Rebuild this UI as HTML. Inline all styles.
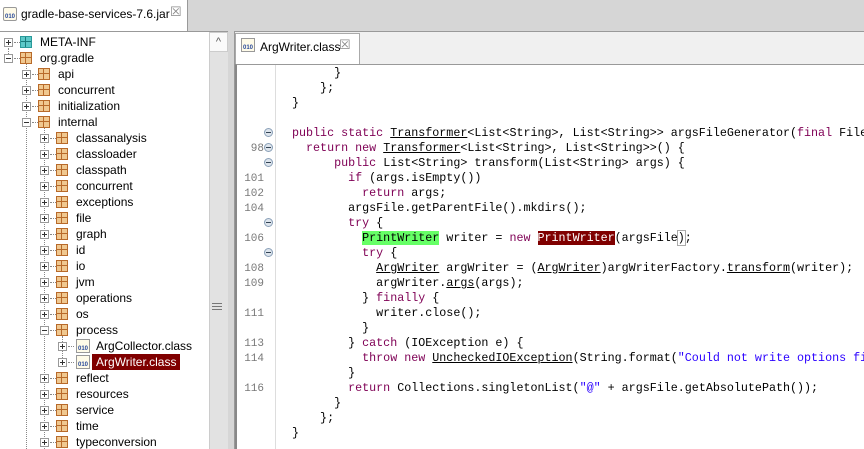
<!DOCTYPE html>
<html><head><meta charset="utf-8"><style>
*{margin:0;padding:0;box-sizing:border-box}
html,body{width:864px;height:449px;overflow:hidden}
body{background:#d6d6d6;font-family:"Liberation Sans","Noto Sans CJK JP",sans-serif;position:relative}
.a{position:absolute}
.tr{position:absolute;height:16px;font-size:12px;line-height:16px;color:#000;white-space:nowrap}
.bx{position:absolute;width:9px;height:9px;border:1px solid #999;background:#fff;top:4px}
.bx:before{content:"";position:absolute;left:1px;top:3px;width:5px;height:1px;background:#333}
.bx.p:after{content:"";position:absolute;left:3px;top:1px;width:1px;height:5px;background:#333}
.pk{position:absolute;top:2px;width:12px;height:12px;border:1px solid #b86a2a;background:
linear-gradient(#b86a2a,#b86a2a) 4px 0/1px 100% no-repeat,linear-gradient(#b86a2a,#b86a2a) 0 4px/100% 1px no-repeat,#f0c890}
.pk.m{border-color:#2a9a9a;background:linear-gradient(#1a7a7a,#1a7a7a) 4px 0/1px 100% no-repeat,linear-gradient(#1a7a7a,#1a7a7a) 0 4px/100% 1px no-repeat,#5cc8c8}
.cf{position:absolute;top:1px;width:14px;height:14px;border:1px solid #999;background:#fffbe8;font:bold 6px "Liberation Sans",sans-serif;color:#2a4a9a;padding-top:6px;text-align:center}
.dl{position:absolute;border-top:1px dotted #888;height:0;top:8px;width:6px}
.code{position:absolute;left:292px;font-family:"Liberation Mono",monospace;font-size:11.7px;line-height:15px;white-space:pre;color:#000}
.ln{position:absolute;left:238px;width:26px;text-align:right;font-family:"Liberation Mono",monospace;font-size:11px;color:#787878;line-height:16px}
.k{color:#7f0055}.s{color:#2a00ff}.u{text-decoration:underline}
.fd{position:absolute;left:264px;width:9px;height:9px;border-radius:50%;background:#dde4ec;border:1px solid #8aa0b8}
.fd:after{content:"";position:absolute;left:1px;top:3px;width:5px;height:1px;background:#345}
</style></head><body>
<div class="a" style="left:0;top:0;width:188px;height:31px;background:#fff;border-right:1px solid #999"></div>
<div class="cf" style="left:3px;top:7px;border-radius:2px">010</div>
<div class="a" style="left:21px;top:7px;font-size:12px">gradle-base-services-7.6.jar</div>
<div class="a" style="left:170px;top:4px;font-size:13px;color:#888">☒</div>
<div class="a" style="left:0;top:31px;width:228px;height:418px;background:#fff;border-top:1px solid #999"></div>
<div class="a" style="left:209px;top:32px;width:19px;height:417px;background:#e2e2e2;border-left:1px solid #ccc"></div>
<div class="a" style="left:209px;top:32px;width:19px;height:20px;background:#fafafa;border:1px solid #ccc;text-align:center;font-size:11px;line-height:18px;color:#555">^</div>
<div class="a" style="left:212px;top:303px;width:10px;height:7px;border-top:1px solid #777;border-bottom:1px solid #777"></div>
<div class="a" style="left:212px;top:306px;width:10px;height:1px;background:#777"></div>
<div class="a" style="left:228px;top:31px;width:6px;height:418px;background:#d6d6d6"></div>
<div class="a" style="left:8px;top:48px;height:10px;border-left:1px dotted #888"></div>
<div class="a" style="left:26px;top:64px;height:385px;border-left:1px dotted #888"></div>
<div class="a" style="left:44px;top:128px;height:321px;border-left:1px dotted #888"></div>
<div class="a" style="left:62px;top:336px;height:24px;border-left:1px dotted #888"></div>

<div class="tr" style="top:34px;left:0"><div class="bx p" style="left:4px"></div><div class="dl" style="left:14px"></div><div class="pk m" style="left:20px"></div><span class="a" style="left:40px">META-INF</span></div>
<div class="tr" style="top:50px;left:0"><div class="bx" style="left:4px"></div><div class="dl" style="left:14px"></div><div class="pk" style="left:20px"></div><span class="a" style="left:40px">org.gradle</span></div>
<div class="tr" style="top:66px;left:18px"><div class="bx p" style="left:4px"></div><div class="dl" style="left:14px"></div><div class="pk" style="left:20px"></div><span class="a" style="left:40px">api</span></div>
<div class="tr" style="top:82px;left:18px"><div class="bx p" style="left:4px"></div><div class="dl" style="left:14px"></div><div class="pk" style="left:20px"></div><span class="a" style="left:40px">concurrent</span></div>
<div class="tr" style="top:98px;left:18px"><div class="bx p" style="left:4px"></div><div class="dl" style="left:14px"></div><div class="pk" style="left:20px"></div><span class="a" style="left:40px">initialization</span></div>
<div class="tr" style="top:114px;left:18px"><div class="bx" style="left:4px"></div><div class="dl" style="left:14px"></div><div class="pk" style="left:20px"></div><span class="a" style="left:40px">internal</span></div>
<div class="tr" style="top:130px;left:36px"><div class="bx p" style="left:4px"></div><div class="dl" style="left:14px"></div><div class="pk" style="left:20px"></div><span class="a" style="left:40px">classanalysis</span></div>
<div class="tr" style="top:146px;left:36px"><div class="bx p" style="left:4px"></div><div class="dl" style="left:14px"></div><div class="pk" style="left:20px"></div><span class="a" style="left:40px">classloader</span></div>
<div class="tr" style="top:162px;left:36px"><div class="bx p" style="left:4px"></div><div class="dl" style="left:14px"></div><div class="pk" style="left:20px"></div><span class="a" style="left:40px">classpath</span></div>
<div class="tr" style="top:178px;left:36px"><div class="bx p" style="left:4px"></div><div class="dl" style="left:14px"></div><div class="pk" style="left:20px"></div><span class="a" style="left:40px">concurrent</span></div>
<div class="tr" style="top:194px;left:36px"><div class="bx p" style="left:4px"></div><div class="dl" style="left:14px"></div><div class="pk" style="left:20px"></div><span class="a" style="left:40px">exceptions</span></div>
<div class="tr" style="top:210px;left:36px"><div class="bx p" style="left:4px"></div><div class="dl" style="left:14px"></div><div class="pk" style="left:20px"></div><span class="a" style="left:40px">file</span></div>
<div class="tr" style="top:226px;left:36px"><div class="bx p" style="left:4px"></div><div class="dl" style="left:14px"></div><div class="pk" style="left:20px"></div><span class="a" style="left:40px">graph</span></div>
<div class="tr" style="top:242px;left:36px"><div class="bx p" style="left:4px"></div><div class="dl" style="left:14px"></div><div class="pk" style="left:20px"></div><span class="a" style="left:40px">id</span></div>
<div class="tr" style="top:258px;left:36px"><div class="bx p" style="left:4px"></div><div class="dl" style="left:14px"></div><div class="pk" style="left:20px"></div><span class="a" style="left:40px">io</span></div>
<div class="tr" style="top:274px;left:36px"><div class="bx p" style="left:4px"></div><div class="dl" style="left:14px"></div><div class="pk" style="left:20px"></div><span class="a" style="left:40px">jvm</span></div>
<div class="tr" style="top:290px;left:36px"><div class="bx p" style="left:4px"></div><div class="dl" style="left:14px"></div><div class="pk" style="left:20px"></div><span class="a" style="left:40px">operations</span></div>
<div class="tr" style="top:306px;left:36px"><div class="bx p" style="left:4px"></div><div class="dl" style="left:14px"></div><div class="pk" style="left:20px"></div><span class="a" style="left:40px">os</span></div>
<div class="tr" style="top:322px;left:36px"><div class="bx" style="left:4px"></div><div class="dl" style="left:14px"></div><div class="pk" style="left:20px"></div><span class="a" style="left:40px">process</span></div>
<div class="tr" style="top:338px;left:54px"><div class="bx p" style="left:4px"></div><div class="dl" style="left:14px"></div><div class="cf" style="left:22px">010</div><span class="a" style="left:42px">ArgCollector.class</span></div>
<div class="tr" style="top:354px;left:54px"><div class="bx p" style="left:4px"></div><div class="dl" style="left:14px"></div><div class="cf" style="left:22px">010</div><span class="a" style="left:38px;background:#800000;color:#fff;padding:0 4px">ArgWriter.class</span></div>
<div class="tr" style="top:370px;left:36px"><div class="bx p" style="left:4px"></div><div class="dl" style="left:14px"></div><div class="pk" style="left:20px"></div><span class="a" style="left:40px">reflect</span></div>
<div class="tr" style="top:386px;left:36px"><div class="bx p" style="left:4px"></div><div class="dl" style="left:14px"></div><div class="pk" style="left:20px"></div><span class="a" style="left:40px">resources</span></div>
<div class="tr" style="top:402px;left:36px"><div class="bx p" style="left:4px"></div><div class="dl" style="left:14px"></div><div class="pk" style="left:20px"></div><span class="a" style="left:40px">service</span></div>
<div class="tr" style="top:418px;left:36px"><div class="bx p" style="left:4px"></div><div class="dl" style="left:14px"></div><div class="pk" style="left:20px"></div><span class="a" style="left:40px">time</span></div>
<div class="tr" style="top:434px;left:36px"><div class="bx p" style="left:4px"></div><div class="dl" style="left:14px"></div><div class="pk" style="left:20px"></div><span class="a" style="left:40px">typeconversion</span></div>

<div class="a" style="left:234px;top:31px;width:630px;height:418px;background:#f0f0f0;border-left:1px solid #999;border-top:1px solid #999"></div>
<div class="a" style="left:235px;top:33px;width:125px;height:31px;background:#fff;border:1px solid #aaa;border-bottom:none"></div>
<div class="cf" style="left:241px;top:38px">010</div>
<div class="a" style="left:260px;top:40px;font-size:12px">ArgWriter.class</div>
<div class="a" style="left:339px;top:37px;font-size:13px;color:#888">☒</div>
<div class="a" style="left:235px;top:64px;width:629px;height:385px;background:#fff;border-top:1px solid #999;border-left:2px solid #888"></div>
<div class="a" style="left:275px;top:65px;width:1px;height:384px;background:#ddd"></div>

<div class="ln" style="top:141px">98</div><div class="ln" style="top:171px">101</div><div class="ln" style="top:186px">102</div><div class="ln" style="top:201px">104</div><div class="ln" style="top:231px">106</div><div class="ln" style="top:261px">108</div><div class="ln" style="top:276px">109</div><div class="ln" style="top:306px">111</div><div class="ln" style="top:336px">113</div><div class="ln" style="top:351px">114</div><div class="ln" style="top:381px">116</div>
<div class="fd" style="top:128px"></div><div class="fd" style="top:143px"></div><div class="fd" style="top:158px"></div><div class="fd" style="top:218px"></div><div class="fd" style="top:248px"></div>

<div class="code" style="top:66px">      }
    };
}

<span class="k">public static</span> <span class="u">Transformer</span>&lt;List&lt;String&gt;, List&lt;String&gt;&gt; argsFileGenerator(<span class="k">final</span> File
  <span class="k">return new</span> <span class="u">Transformer</span>&lt;List&lt;String&gt;, List&lt;String&gt;&gt;() {
      <span class="k">public</span> List&lt;String&gt; transform(List&lt;String&gt; args) {
        <span class="k">if</span> (args.isEmpty())
          <span class="k">return</span> args;
        argsFile.getParentFile().mkdirs();
        <span class="k">try</span> {
          <span style="background:#66ff66">PrintWriter</span> writer = <span class="k">new</span> <span style="background:#800000;color:#fff">PrintWriter</span>(argsFile<span style="outline:1px solid #aaa">)</span>;
          <span class="k">try</span> {
            <span class="u">ArgWriter</span> argWriter = (<span class="u">ArgWriter</span>)argWriterFactory.<span class="u">transform</span>(writer);
            argWriter.<span class="u">args</span>(args);
          } <span class="k">finally</span> {
            writer.close();
          }
        } <span class="k">catch</span> (IOException e) {
          <span class="k">throw new</span> <span class="u">UncheckedIOException</span>(String.format(<span class="s">"Could not write options fi</span>
        }
        <span class="k">return</span> Collections.singletonList(<span class="s">"@"</span> + argsFile.getAbsolutePath());
      }
    };
}</div>
</body></html>
